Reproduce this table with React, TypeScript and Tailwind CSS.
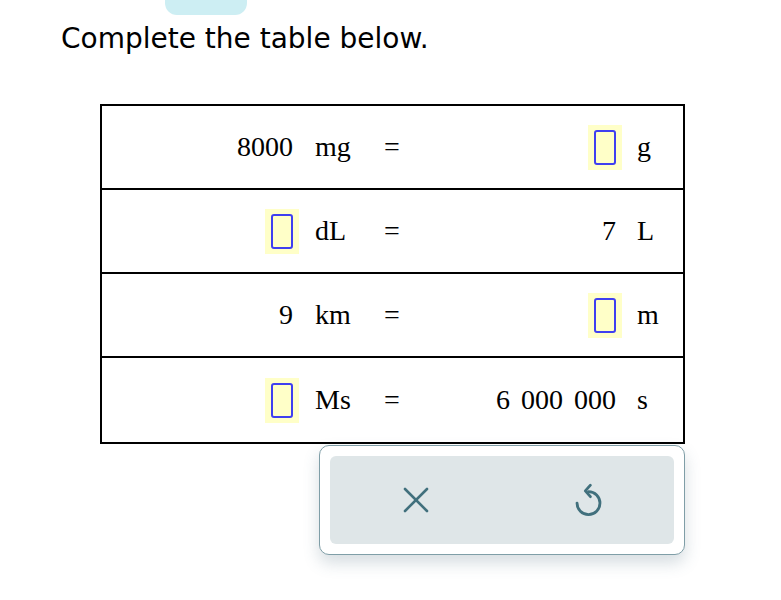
import React from 'react';

type Cell = { value?: string; unit: string };
type Row = { left: Cell; right: Cell };

const rows: Row[] = [
  { left: { value: '8000', unit: 'mg' }, right: { unit: 'g' } },
  { left: { unit: 'dL' }, right: { value: '7', unit: 'L' } },
  { left: { value: '9', unit: 'km' }, right: { unit: 'm' } },
  { left: { unit: 'Ms' }, right: { value: '6 000 000', unit: 's' } },
];

const AnswerBox: React.FC = () => (
  <span className="-mr-[6px] inline-flex h-[45px] w-[34px] items-center justify-center bg-[#ffffc8] align-middle">
    <span className="h-[35px] w-[22px] rounded-[3px] border-[2.5px] border-[#3f3ff0]" />
  </span>
);

const Value: React.FC<{ cell: Cell }> = ({ cell }) =>
  cell.value ? <span className="[word-spacing:4px]">{cell.value}</span> : <AnswerBox />;

const UndoIcon: React.FC = () => (
  <svg width="31" height="37" viewBox="0 0 24 29" fill="none" stroke="#41707d" strokeWidth="2.2" strokeLinecap="round" strokeLinejoin="round">
    <path d="M12 7.5 A9 9 0 1 1 3 16.5" />
    <path d="M13.5 2.5 L9.5 7 L13.5 11.5" />
  </svg>
);

const CloseIcon: React.FC = () => (
  <svg width="26" height="26" viewBox="0 0 26 26" fill="none" stroke="#41707d" strokeWidth="2.6" strokeLinecap="round">
    <path d="M2 2 L24 24" />
    <path d="M24 2 L2 24" />
  </svg>
);

export default function App() {
  return (
    <div className="min-h-[600px] w-[781px] bg-white">
      <div className="ml-[165px] h-[15px] w-[82px] rounded-b-[12px] bg-[#cdeef3]" />

      <h1 className="ml-[61px] mt-[8px] text-[28px] leading-[32px] text-black [font-family:'DejaVu_Sans',Verdana,sans-serif]">
        Complete the table below.
      </h1>

      <div className="ml-[100px] mt-[49px] w-[585px]">
        <div className="border-2 border-black text-[28px] text-black [font-family:'Liberation_Serif','Times_New_Roman',serif]">
          {rows.map((row, i) => (
            <div
              key={i}
              className={`grid grid-cols-[191px_77px_44px_202px_1fr] items-center ${i > 0 ? 'border-t-2 border-black' : ''} ${i === 0 ? 'h-[82px]' : i === rows.length - 1 ? 'h-[86px]' : 'h-[84px]'}`}
            >
              <div className="text-right">
                <Value cell={row.left} />
              </div>
              <div className="pl-[22px]">{row.left.unit}</div>
              <div className="text-center">=</div>
              <div className="text-right">
                <Value cell={row.right} />
              </div>
              <div className="pl-[21px]">{row.right.unit}</div>
            </div>
          ))}
        </div>

        <div className="ml-[219px] mt-[1px] rounded-[10px] border-[1.5px] border-[#7f9ea7] bg-white p-[10px] shadow-[0_8px_16px_rgba(70,100,120,0.22)]">
          <div className="flex h-[88px] items-center rounded-[6px] bg-[#dfe6e8]">
            <div className="flex w-[172px] justify-center">
              <CloseIcon />
            </div>
            <div className="flex w-[172px] justify-center">
              <UndoIcon />
            </div>
          </div>
        </div>
      </div>
    </div>
  );
}
